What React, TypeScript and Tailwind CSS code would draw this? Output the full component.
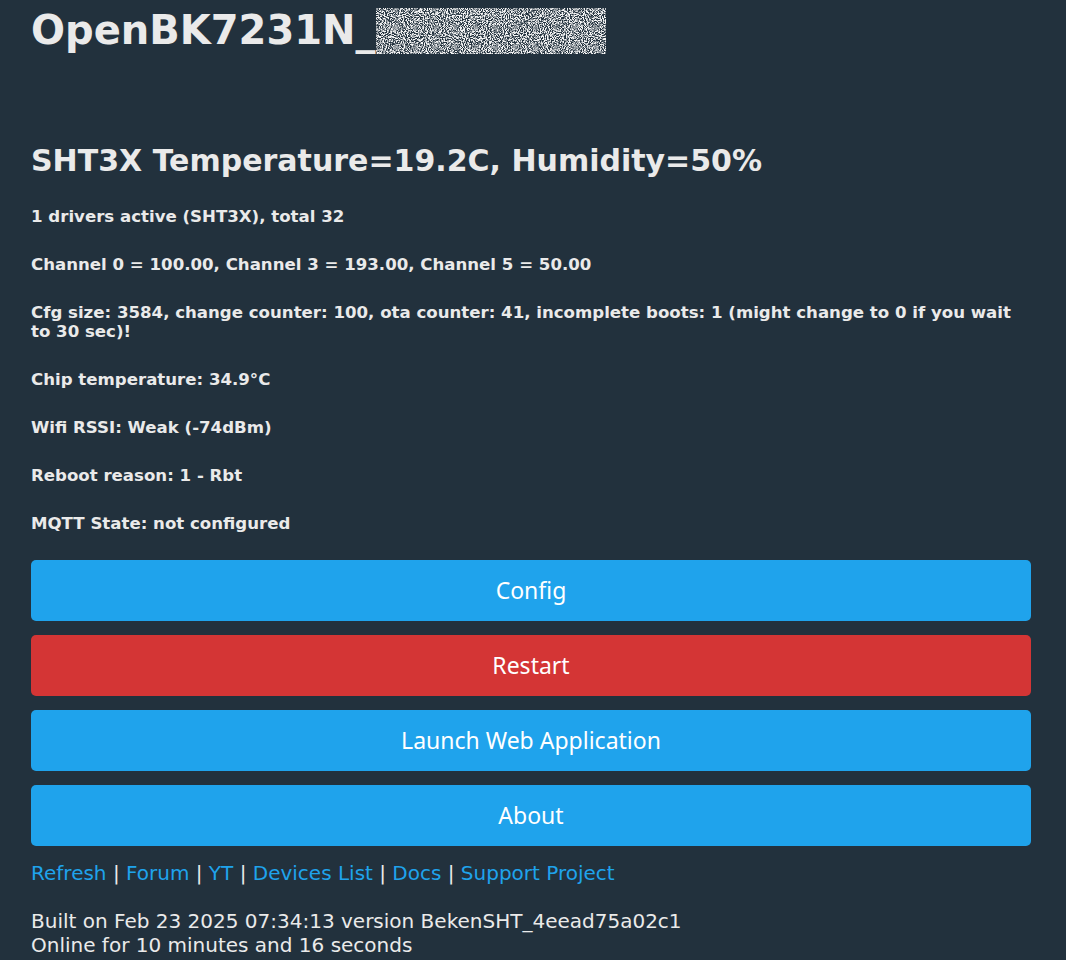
import React from 'react'

const INFO = [
  '1 drivers active (SHT3X), total 32',
  'Channel 0 = 100.00, Channel 3 = 193.00, Channel 5 = 50.00',
  'Cfg size: 3584, change counter: 100, ota counter: 41, incomplete boots: 1 (might change to 0 if you wait to 30 sec)!',
  'Chip temperature: 34.9°C',
  'Wifi RSSI: Weak (-74dBm)',
  'Reboot reason: 1 - Rbt',
  'MQTT State: not configured',
]

const BUTTONS = [
  { label: 'Config', color: 'bg-[#1fa3ec]' },
  { label: 'Restart', color: 'bg-[#d43535]' },
  { label: 'Launch Web Application', color: 'bg-[#1fa3ec]' },
  { label: 'About', color: 'bg-[#1fa3ec]' },
]

const LINKS = ['Refresh', 'Forum', 'YT', 'Devices List', 'Docs', 'Support Project']

// censored part of the device name, drawn as speckle noise
function Noise() {
  return (
    <svg width="230" height="46" className="inline-block align-[-10px]">
      <defs>
        <filter id="speckle" x="0" y="0" width="100%" height="100%">
          <feTurbulence type="fractalNoise" baseFrequency="0.95" numOctaves="2" seed="4" />
          <feColorMatrix
            type="matrix"
            values="0 0 0 0 0.92  0 0 0 0 0.92  0 0 0 0 0.92  4.5 0 0 0 -1.75"
          />
        </filter>
      </defs>
      <rect x="0" y="0" width="230" height="46" filter="url(#speckle)" />
    </svg>
  )
}

export default function App() {
  return (
    <div className="min-h-[960px] bg-[#22313d] text-[#eaeaea] font-['DejaVu_Sans',sans-serif]">
      <div className="ml-[31px] w-[1000px] pt-[7px]">
        <h1 className="text-[40px] font-bold leading-[46px]">
          OpenBK7231N_
          <Noise />
        </h1>

        <h2 className="mt-[89px] text-[30px] font-bold leading-[35px]">
          SHT3X Temperature=19.2C, Humidity=50%
        </h2>

        <div className="mt-[29px] flex flex-col gap-[29px]">
          {INFO.map((line) => (
            <p key={line} className="text-[16.6px] font-bold leading-[19px]">
              {line}
            </p>
          ))}
        </div>

        <div className="mt-[27px] flex flex-col gap-[14px]">
          {BUTTONS.map((b) => (
            <button
              key={b.label}
              className={`h-[61px] w-full rounded-[5px] ${b.color} text-white text-[23px] font-['Noto_Sans',sans-serif]`}
            >
              {b.label}
            </button>
          ))}
        </div>

        <div className="mt-[15px] text-[20px] leading-[24px]">
          {LINKS.map((l, i) => (
            <span key={l}>
              {i > 0 && ' | '}
              <a className="text-[#1fa3ec]">{l}</a>
            </span>
          ))}
        </div>

        <div className="mt-[24px] text-[20px] leading-[24px]">
          <div>Built on Feb 23 2025 07:34:13 version BekenSHT_4eead75a02c1</div>
          <div>Online for 10 minutes and 16 seconds</div>
        </div>
      </div>
    </div>
  )
}
